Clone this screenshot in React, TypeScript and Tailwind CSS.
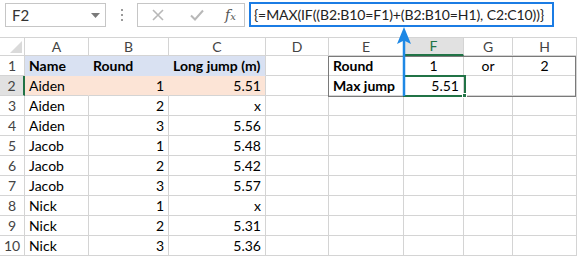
import React from "react";

const G = "border-[#d4d4d4]";

type Cell = { t?: string; b?: boolean; a?: "l" | "r" | "c"; bg?: string };

const rows: Cell[][] = [
  [
    { t: "Name", b: true, bg: "bg-[#d9e1f2]" },
    { t: "Round", b: true, bg: "bg-[#d9e1f2]" },
    { t: "Long jump (m)", b: true, bg: "bg-[#d9e1f2]" },
    {},
    { t: "Round", b: true },
    { t: "1", a: "c" },
    { t: "or", a: "c" },
    { t: "2", a: "c" },
  ],
  [
    { t: "Aiden", bg: "bg-[#fce4d6]" },
    { t: "1", a: "r", bg: "bg-[#fce4d6]" },
    { t: "5.51", a: "r", bg: "bg-[#fce4d6]" },
    {},
    { t: "Max jump", b: true },
    { t: "5.51", a: "r" },
    {},
    {},
  ],
  ...(
    [
      ["Aiden", "2", "x"],
      ["Aiden", "3", "5.56"],
      ["Jacob", "1", "5.48"],
      ["Jacob", "2", "5.42"],
      ["Jacob", "3", "5.57"],
      ["Nick", "1", "x"],
      ["Nick", "2", "5.31"],
      ["Nick", "3", "5.36"],
    ] as string[][]
  ).map((r) => [
    { t: r[0] },
    { t: r[1], a: "r" as const },
    { t: r[2], a: "r" as const },
    {},
    {},
    {},
    {},
    {},
  ]),
];

const widths = ["w-[64px]", "w-[80px]", "w-[97px]", "w-[63px]", "w-[75px]", "w-[60px]", "w-[49px]", "w-[64px]"];
const letters = ["A", "B", "C", "D", "E", "F", "G", "H"];

export default function App() {
  return (
    <div className="relative w-[577px] h-[257px] overflow-hidden bg-white font-['Lato',sans-serif] text-[14px] text-black">
      {/* Toolbar */}
      <div className="flex h-[37px] items-start pl-[5px] pt-[3px]">
        <div className="flex h-[24px] w-[101px] items-center justify-between border border-[#c6c6c6] pl-[6px] pr-[5px] text-[15px] text-[#333]">
          <span>F2</span>
          <svg width="9" height="5" viewBox="0 0 9 5">
            <path d="M0 0 L9 0 L4.5 5 Z" fill="#7a7a7a" />
          </svg>
        </div>
        <div className="flex h-[24px] w-[31px] flex-col items-center justify-center gap-[3px]">
          <span className="h-[2px] w-[2px] bg-[#9a9a9a]" />
          <span className="h-[2px] w-[2px] bg-[#9a9a9a]" />
          <span className="h-[2px] w-[2px] bg-[#9a9a9a]" />
        </div>
        <div className="flex h-[24px] w-[108px] items-center border border-[#c6c6c6]">
          <svg className="ml-[14px]" width="12" height="12" viewBox="0 0 12 12">
            <path d="M1 1 L11 11 M11 1 L1 11" stroke="#b8b8b8" strokeWidth="1.6" />
          </svg>
          <svg className="ml-[26px]" width="14" height="12" viewBox="0 0 14 12">
            <path d="M1 6.5 L5 10.5 L13 1.5" stroke="#b8b8b8" strokeWidth="2" fill="none" />
          </svg>
          <span className="ml-[21px] font-['DejaVu_Serif',serif] text-[14px] italic text-[#555]">
            f<span className="text-[10px]">x</span>
          </span>
        </div>
        <div className="ml-[4px] -mt-[1px] flex h-[25px] w-[305px] items-center overflow-hidden whitespace-nowrap border-2 border-[#1b7ce4] pl-[3px] text-[14px] tracking-[-0.1px] text-[#222]">
          {"{=MAX(IF((B2:B10=F1)+(B2:B10=H1), C2:C10))}"}
        </div>
      </div>

      {/* Column headers */}
      <div className={`flex h-[19px] border-t ${G} text-[#444]`}>
        <div className={`relative w-[25px] border-r border-b ${G}`}>
          <svg className="absolute right-[2px] bottom-[2px]" width="12" height="12" viewBox="0 0 12 12">
            <path d="M12 0 L12 12 L0 12 Z" fill="#dadada" />
          </svg>
        </div>
        {letters.map((l, i) =>
          l === "F" ? (
            <div
              key={l}
              className={`${widths[i]} flex items-center justify-center border-r ${G} border-b-2 border-b-[#217346] bg-[#e1e1e1] leading-none text-[#217346]`}
            >
              {l}
            </div>
          ) : (
            <div key={l} className={`${widths[i]} flex items-center justify-center border-r border-b ${G} leading-none`}>
              {l}
            </div>
          )
        )}
      </div>

      {/* Rows */}
      {rows.map((r, ri) => (
        <div key={ri} className="flex h-[20px]">
          <div
            className={`flex w-[25px] items-center justify-center border-b ${G} text-[#444] ${
              ri === 1 ? "bg-[#e1e1e1] border-r-2 border-r-[#217346]" : `border-r ${G}`
            }`}
          >
            {ri + 1}
          </div>
          {r.map((c, ci) => {
            const align = c.a === "r" ? "justify-end pr-[4px]" : c.a === "c" ? "justify-center" : "justify-start pl-[4px]";
            const fillBorders =
              c.bg && ri === 0
                ? `${c.bg} border-b border-b-[#d9e1f2] ${ci === 2 ? `border-r ${G}` : "border-r border-r-[#d9e1f2]"}`
                : c.bg
                ? `${c.bg} border-b ${G} ${ci === 2 ? `border-r ${G}` : "border-r border-r-[#fce4d6]"}`
                : `border-r border-b ${G}`;
            return (
              <div
                key={ci}
                className={`${widths[ci]} flex items-center whitespace-nowrap ${align} ${fillBorders} ${c.b ? "font-bold" : ""}`}
              >
                {c.t}
              </div>
            );
          })}
        </div>
      ))}

      {/* Border around E1:H2 */}
      <div className="pointer-events-none absolute left-[328px] top-[56px] h-[41px] w-[248px] border border-[#7a7a7a]" />

      {/* Selection F2 */}
      <div className="pointer-events-none absolute left-[403px] top-[75px] h-[22px] w-[63px] border-2 border-[#217346]" />
      <div className="pointer-events-none absolute left-[462px] top-[93px] h-[5px] w-[5px] border border-white bg-[#217346]" />

      {/* Blue arrow */}
      <svg className="pointer-events-none absolute left-[396px] top-[26px]" width="16" height="72" viewBox="0 0 16 72">
        <path d="M8 12 L8 70" stroke="#1e88e5" strokeWidth="2.5" />
        <path d="M8 1 L15 18 L8 14.5 L1 18 Z" fill="#1e88e5" />
      </svg>
    </div>
  );
}
